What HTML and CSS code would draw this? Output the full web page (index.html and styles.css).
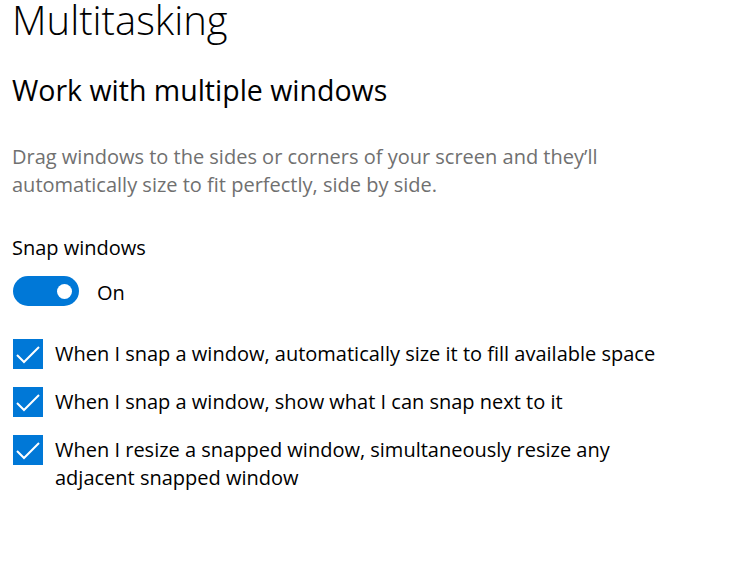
FILE: index.html
```html
<!DOCTYPE html>
<html>
<head>
<meta charset="utf-8">
<link rel="stylesheet" href="styles.css">
</head>
<body>
<div class="page">
  <h1 class="title">Multitasking</h1>
  <h2 class="subtitle">Work with multiple windows</h2>
  <p class="desc">Drag windows to the sides or corners of your screen and they’ll automatically size to fit perfectly, side by side.</p>
  <div class="label">Snap windows</div>
  <div class="toggle-row">
    <span class="toggle"><span class="knob"></span></span>
    <span class="toggle-text">On</span>
  </div>
  <div class="checks">
    <div class="check">
      <span class="box"><svg viewBox="0 0 30 30" width="30" height="30"><path d="M4 16 L11 23 L26 8" fill="none" stroke="#fff" stroke-width="2"/></svg></span>
      <span class="check-text">When I snap a window, automatically size it to fill available space</span>
    </div>
    <div class="check">
      <span class="box"><svg viewBox="0 0 30 30" width="30" height="30"><path d="M4 16 L11 23 L26 8" fill="none" stroke="#fff" stroke-width="2"/></svg></span>
      <span class="check-text">When I snap a window, show what I can snap next to it</span>
    </div>
    <div class="check">
      <span class="box"><svg viewBox="0 0 30 30" width="30" height="30"><path d="M4 16 L11 23 L26 8" fill="none" stroke="#fff" stroke-width="2"/></svg></span>
      <span class="check-text">When I resize a snapped window, simultaneously resize any adjacent snapped window</span>
    </div>
  </div>
</div>
</body>
</html>
```
FILE: styles.css
```css
html, body {
  margin: 0;
  padding: 0;
  background: #ffffff;
}
body {
  font-family: "Open Sans", "Noto Sans", sans-serif;
  color: #000;
}
.page {
  padding-left: 12px;
  width: 680px;
}
.title {
  margin: 0;
  font-size: 40px;
  font-weight: 300;
  line-height: 40px;
}
.subtitle {
  margin: 0;
  margin-top: 32px;
  font-size: 28.5px;
  font-weight: 400;
  line-height: 36px;
}
.desc {
  margin: 0;
  margin-top: 35px;
  font-size: 20px;
  line-height: 28px;
  color: #707070;
  width: 600px;
}
.label {
  margin-top: 35px;
  font-size: 20px;
  line-height: 28px;
}
.toggle-row {
  display: flex;
  align-items: center;
  margin-top: 13px;
  gap: 18px;
  padding-left: 1px;
}
.toggle {
  width: 66px;
  height: 30px;
  border-radius: 15px;
  background: #0078d7;
  display: flex;
  align-items: center;
  justify-content: flex-end;
  padding-right: 7px;
  box-sizing: border-box;
}
.knob {
  width: 15px;
  height: 15px;
  border-radius: 50%;
  background: #fff;
}
.toggle-text {
  font-size: 20px;
  line-height: 28px;
  padding-top: 4px;
}
.checks {
  margin-top: 32px;
  display: flex;
  flex-direction: column;
  gap: 18px;
}
.check {
  display: flex;
  align-items: flex-start;
  gap: 12px;
  padding-left: 1px;
}
.box {
  width: 30px;
  height: 30px;
  background: #0078d7;
  flex: none;
}
.box svg {
  display: block;
}
.check-text {
  font-size: 20px;
  line-height: 28px;
  margin-top: 1px;
  width: 615px;
}
```
